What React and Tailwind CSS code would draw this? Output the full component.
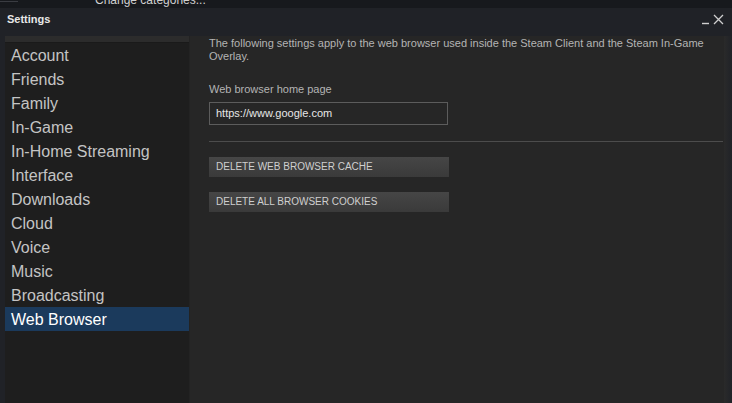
import React from "react";

const sections = [
  "Account",
  "Friends",
  "Family",
  "In-Game",
  "In-Home Streaming",
  "Interface",
  "Downloads",
  "Cloud",
  "Voice",
  "Music",
  "Broadcasting",
  "Web Browser",
];

const SettingsButton = ({ label }) => (
  <button className="flex h-[20px] w-[240px] items-center bg-gradient-to-b from-[#464646] to-[#3a3a3a] px-[7px] text-[10px] leading-none text-[#cfcfcf]">
    {label}
  </button>
);

export default function App() {
  const selected = "Web Browser";

  return (
    <div
      className="flex h-[403px] w-[732px] flex-col overflow-hidden bg-[#17191d]"
      style={{ fontFamily: '"Liberation Sans", Arial, sans-serif' }}
    >
      {/* window behind */}
      <div className="relative h-[8px] shrink-0 overflow-hidden">
        <div className="absolute left-0 top-[1px] h-[1px] w-[18px] bg-[#3a3c42]" />
        <div className="absolute left-[95px] top-[-9px] text-[12px] text-[#d0d0d0]">
          Change categories...
        </div>
      </div>

      {/* title bar */}
      <div className="flex h-[28px] shrink-0 items-center justify-between bg-[#202227] pb-[6px] pl-[7px] pr-[8px]">
        <span className="text-[11px] font-bold text-[#e8e8e8]">Settings</span>
        <div className="flex items-center gap-[3px] text-[#cfcfcf]">
          <svg width="9" height="12" viewBox="0 0 9 12">
            <path d="M1 10.5h7" stroke="currentColor" strokeWidth="1.4" />
          </svg>
          <svg width="11" height="11" viewBox="0 0 11 11">
            <path d="M1 1l9 9M10 1l-9 9" stroke="currentColor" strokeWidth="1.3" />
          </svg>
        </div>
      </div>

      <div className="flex min-h-0 flex-1 bg-[#202227] pl-[5px]">
        {/* sidebar */}
        <div className="flex w-[184px] shrink-0 flex-col bg-[#1e1e1e]">
          <div className="h-[6px] bg-[#2c2c2c]" />
          <div className="h-[1px] bg-[#1a1a1a]" />
          {sections.map((s) => (
            <div
              key={s}
              className={`flex h-[24px] items-center pl-[6px] pt-[1px] text-[16px] ${
                s === selected ? "bg-[#1b3a5c] text-white" : "text-[#c4c4c4]"
              }`}
            >
              {s}
            </div>
          ))}
        </div>

        <div className="w-[1px] shrink-0 bg-[#232323]" />

        {/* content */}
        <div className="flex min-w-0 flex-1 flex-col bg-[#262626] pl-[19px] pr-[1px] pt-[1px]">
          <p className="text-[11px] leading-[13px] text-[#b4b4b4]">
            The following settings apply to the web browser used inside the Steam Client and the Steam In-Game
            Overlay.
          </p>

          <label className="mt-[20px] text-[11px] leading-[13px] text-[#b4b4b4]">
            Web browser home page
          </label>
          <div className="mt-[6px] flex h-[23px] w-[239px] items-center border border-[#5c5c5c] px-[6px] text-[11px] text-[#e6e6e6]">
            https://www.google.com
          </div>

          <div className="mt-[16px] h-[1px] bg-[#4c4c4c]" />

          <div className="mt-[15px] flex flex-col gap-[15px]">
            <SettingsButton label="DELETE WEB BROWSER CACHE" />
            <SettingsButton label="DELETE ALL BROWSER COOKIES" />
          </div>
        </div>

        <div className="w-[8px] shrink-0 bg-gradient-to-r from-[#2a2a2a] to-[#202227]" />
      </div>
    </div>
  );
}
